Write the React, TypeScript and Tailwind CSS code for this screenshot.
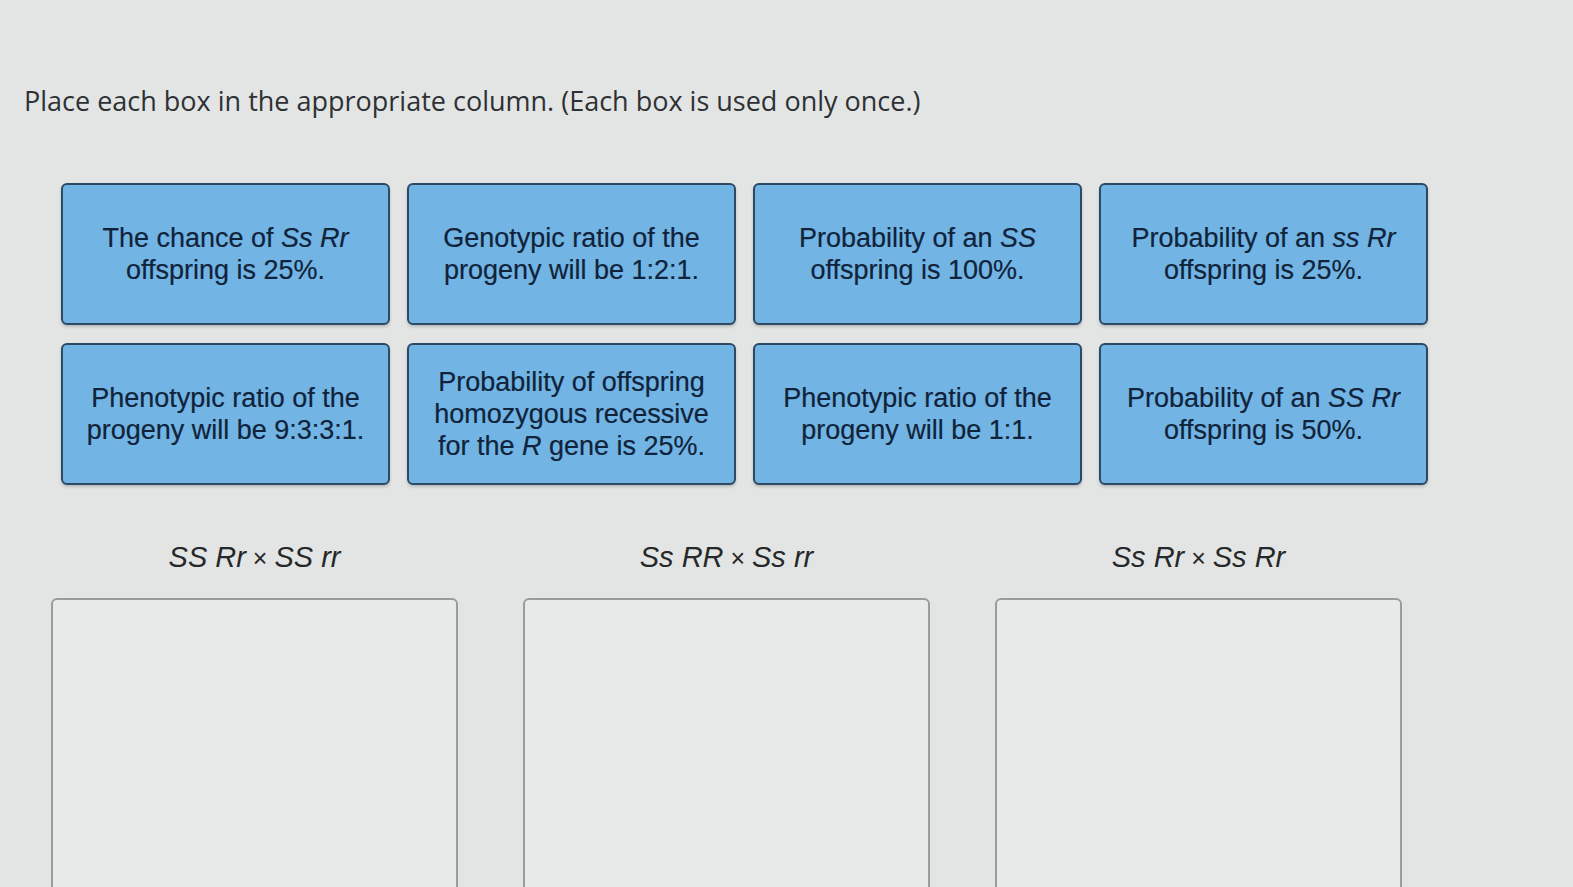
import React from 'react';

type Card = { id: number; body: React.ReactNode };

const I = ({ children }: { children: React.ReactNode }) => <i className="italic">{children}</i>;

const CARDS: Card[] = [
  { id: 1, body: <>The chance of <I>Ss Rr</I><br />offspring is 25%.</> },
  { id: 2, body: <>Genotypic ratio of the<br />progeny will be 1:2:1.</> },
  { id: 3, body: <>Probability of an <I>SS</I><br />offspring is 100%.</> },
  { id: 4, body: <>Probability of an <I>ss Rr</I><br />offspring is 25%.</> },
  { id: 5, body: <>Phenotypic ratio of the<br />progeny will be 9:3:3:1.</> },
  { id: 6, body: <>Probability of offspring<br />homozygous recessive<br />for the <I>R</I> gene is 25%.</> },
  { id: 7, body: <>Phenotypic ratio of the<br />progeny will be 1:1.</> },
  { id: 8, body: <>Probability of an <I>SS Rr</I><br />offspring is 50%.</> },
];

const COLUMNS = ['SS Rr × SS rr', 'Ss RR × Ss rr', 'Ss Rr × Ss Rr'];

export default function App() {
  return (
    <div className="w-[1573px] h-[887px] overflow-hidden bg-[#e3e5e5] font-['Liberation_Sans',Arial,sans-serif]">
      <p className="pl-6 pt-[85px] text-[27px] leading-8 text-[#2e3133] font-['Open_Sans','Lato',sans-serif]">
        Place each box in the appropriate column. (Each box is used only once.)
      </p>

      {/* answer tiles */}
      <div className="ml-[61px] mt-[66px] grid grid-cols-[repeat(4,329px)] gap-x-[17px] gap-y-[18px]">
        {CARDS.map((c) => (
          <div
            key={c.id}
            className="h-[142px] flex items-center justify-center text-center rounded-[6px] border-2 border-[#2c4a63] bg-[#72b5e5] shadow-[0_2px_3px_rgba(0,0,0,0.18)] text-[27px] leading-[32px] text-[#10233a] [-webkit-text-stroke:0.2px_#10233a]"
          >
            <div>{c.body}</div>
          </div>
        ))}
      </div>

      {/* drop columns */}
      <div className="ml-[51px] mt-[56px] grid grid-cols-[repeat(3,407px)] gap-x-[65px]">
        {COLUMNS.map((label) => (
          <div key={label} className="flex flex-col items-center">
            <div className="text-[29px] leading-8 italic text-[#262829] h-8">
              {label.split('×').map((part, i) => (
                <React.Fragment key={i}>
                  {i > 0 && <span className="not-italic text-[25px]"> × </span>}
                  {part.trim()}
                </React.Fragment>
              ))}
            </div>
            <div className="mt-[25px] w-full h-[320px] rounded-[6px] border-2 border-[#9a9c9c] bg-[#e8eaea]" />
          </div>
        ))}
      </div>
    </div>
  );
}
